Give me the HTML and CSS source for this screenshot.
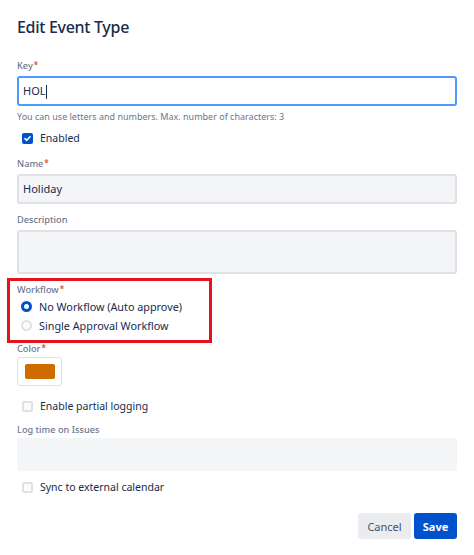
FILE: index.html
```html
<!DOCTYPE html>
<html>
<head>
<meta charset="utf-8">
<link rel="stylesheet" href="styles.css">
</head>
<body>
<div class="dialog">
  <h1 class="title">Edit Event Type</h1>

  <div class="label label-key">Key<span class="req">*</span></div>
  <div class="input input-focus">HOL<span class="caret"></span></div>
  <div class="helper">You can use letters and numbers. Max. number of characters: 3</div>

  <div class="check-row row-enabled">
    <span class="checkbox checked">
      <svg width="11" height="11" viewBox="0 0 11 11"><path d="M3 5.6 L4.8 7.3 L8.1 3.8" fill="none" stroke="#fff" stroke-width="1.6" stroke-linecap="round" stroke-linejoin="round"/></svg>
    </span>
    <span class="check-text">Enabled</span>
  </div>

  <div class="label label-name">Name<span class="req">*</span></div>
  <div class="input input-plain">Holiday</div>

  <div class="label label-desc">Description</div>
  <div class="textarea"></div>

  <div class="highlight">
    <div class="label label-wf">Workflow<span class="req">*</span></div>
    <div class="radio-row">
      <span class="radio checked"></span>
      <span class="check-text">No Workflow (Auto approve)</span>
    </div>
    <div class="radio-row">
      <span class="radio"></span>
      <span class="check-text">Single Approval Workflow</span>
    </div>
  </div>

  <div class="label label-color">Color<span class="req">*</span></div>
  <div class="color-box"><span class="swatch"></span></div>

  <div class="check-row row-partial">
    <span class="checkbox"></span>
    <span class="check-text">Enable partial logging</span>
  </div>

  <div class="label label-log">Log time on Issues</div>
  <div class="input input-log"></div>

  <div class="check-row row-sync">
    <span class="checkbox"></span>
    <span class="check-text">Sync to external calendar</span>
  </div>

  <div class="actions">
    <button class="btn btn-cancel">Cancel</button>
    <button class="btn btn-save">Save</button>
  </div>
</div>
</body>
</html>
```

FILE: styles.css
```css
html, body {
  margin: 0;
  padding: 0;
  background: #ffffff;
}
body {
  font-family: "Segoe UI", "Noto Sans", "Open Sans", sans-serif;
  color: #172b4d;
}
.dialog {
  width: 440px;
  padding: 16px 17px 0 17px;
}
.title {
  margin: 0;
  font-size: 16px;
  line-height: 22px;
  font-weight: 500;
  letter-spacing: -0.3px;
  color: #172b4d;
}
.label {
  font-size: 9.2px;
  line-height: 14px;
  font-weight: 500;
  color: #6b778c;
}
.req {
  color: #de350b;
  margin-left: 1px;
  font-size: 8px;
  vertical-align: top;
  line-height: 12px;
}
.label-key { margin-top: 21px; }
.input {
  box-sizing: border-box;
  height: 30px;
  margin-top: 3px;
  border: 2px solid #dfe1e6;
  border-radius: 3px;
  background: #f4f5f7;
  padding: 0 4px;
  font-size: 11px;
  line-height: 26px;
  color: #172b4d;
}
.input-focus {
  border-color: #4c9aff;
  background: #ffffff;
}
.caret {
  display: inline-block;
  width: 1px;
  height: 14px;
  background: #172b4d;
  vertical-align: middle;
  margin-left: 0;
}
.helper {
  margin-top: 4px;
  font-size: 9px;
  line-height: 14px;
  color: #6b778c;
}
.check-row {
  display: flex;
  align-items: center;
  height: 16px;
  padding-left: 5px;
  gap: 7px;
}
.row-enabled { margin-top: 6px; }
.row-partial { margin-top: 12px; }
.row-sync { margin-top: 8px; }
.checkbox {
  box-sizing: border-box;
  width: 11px;
  height: 11px;
  border: 2px solid #dfe1e6;
  background: #fafbfc;
  border-radius: 2px;
  display: flex;
}
.checkbox.checked {
  border: none;
  background: #0052cc;
}
.check-text {
  font-size: 10.5px;
  line-height: 16px;
  color: #172b4d;
}
.label-name { margin-top: 11px; }
.label-desc { margin-top: 9px; }
.textarea {
  box-sizing: border-box;
  height: 44px;
  margin-top: 3px;
  border: 2px solid #dfe1e6;
  border-radius: 3px;
  background: #f4f5f7;
}
.highlight {
  box-sizing: border-box;
  width: 205px;
  margin-left: -10px;
  margin-top: 4px;
  border: 3px solid #e3141f;
  padding: 2px 0 5px 7px;
}
.radio-row {
  display: flex;
  align-items: center;
  height: 19px;
  padding-left: 4px;
  gap: 7px;
}
.radio-row .check-text {
  font-size: 10.8px;
}
.radio {
  box-sizing: border-box;
  width: 11px;
  height: 11px;
  border-radius: 50%;
  border: 2px solid #dfe1e6;
  background: #fafbfc;
}
.radio.checked {
  border: 3.5px solid #0052cc;
  background: #ffffff;
}
.label-color { margin-top: -1px; }
.color-box {
  box-sizing: border-box;
  width: 45px;
  height: 29px;
  margin-top: 1px;
  border: 1px solid #dfe1e6;
  border-radius: 3px;
  background: #ffffff;
  display: flex;
  align-items: center;
  justify-content: center;
}
.swatch {
  width: 30px;
  height: 15px;
  border-radius: 2px;
  background: #d06b00;
}
.label-log { margin-top: 9px; }
.input-log {
  height: 33px;
  margin-top: 1px;
  border-color: #f4f5f7;
}
.actions {
  display: flex;
  justify-content: flex-end;
  gap: 3px;
  margin-top: 18px;
}
.btn {
  height: 26px;
  border: none;
  border-radius: 3px;
  font-family: inherit;
  font-size: 11px;
  padding: 0;
  cursor: pointer;
}
.btn-cancel {
  width: 53px;
  background: #ebecf0;
  color: #42526e;
}
.btn-save {
  width: 43px;
  background: #0052cc;
  color: #ffffff;
  font-weight: 700;
}
```
